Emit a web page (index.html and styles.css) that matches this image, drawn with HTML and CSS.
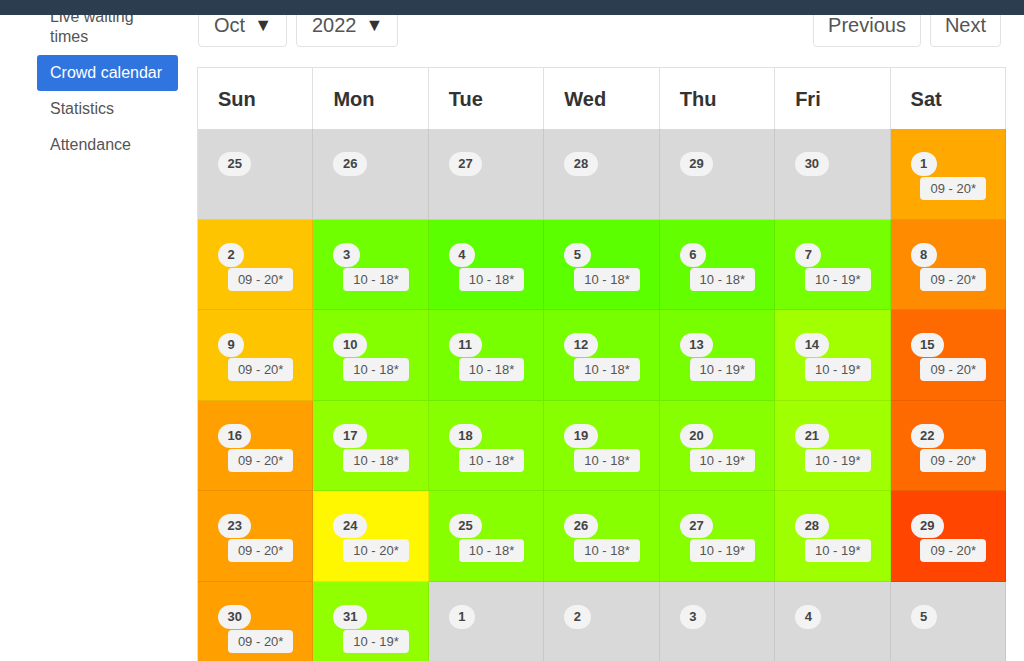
FILE: index.html
```html
<!DOCTYPE html>
<html lang="en">
<head>
<meta charset="utf-8">
<title>Crowd calendar</title>
<link rel="stylesheet" href="styles.css">
</head>
<body>
<div class="topbar"></div>
<div class="page">
  <nav class="sidebar">
    <a class="nav-link" href="#">Live waiting times</a>
    <a class="nav-link active" href="#">Crowd calendar</a>
    <a class="nav-link" href="#">Statistics</a>
    <a class="nav-link" href="#">Attendance</a>
  </nav>
  <main class="main">
    <div class="controls">
      <div class="selects">
        <div class="select">Oct<span class="caret">▼</span></div>
        <div class="select">2022<span class="caret">▼</span></div>
      </div>
      <div class="pager">
        <div class="btn">Previous</div>
        <div class="btn">Next</div>
      </div>
    </div>
    <div class="calendar">
      <div class="head">Sun</div><div class="head">Mon</div><div class="head">Tue</div><div class="head">Wed</div><div class="head">Thu</div><div class="head">Fri</div><div class="head">Sat</div>

      <div class="cell off"><span class="day">25</span></div>
      <div class="cell off"><span class="day">26</span></div>
      <div class="cell off"><span class="day">27</span></div>
      <div class="cell off"><span class="day">28</span></div>
      <div class="cell off"><span class="day">29</span></div>
      <div class="cell off"><span class="day">30</span></div>
      <div class="cell" style="background:#ffa800"><span class="day">1</span><span class="hours">09 - 20*</span></div>

      <div class="cell" style="background:#ffc400"><span class="day">2</span><span class="hours">09 - 20*</span></div>
      <div class="cell" style="background:#6fff00"><span class="day">3</span><span class="hours">10 - 18*</span></div>
      <div class="cell" style="background:#5cff00"><span class="day">4</span><span class="hours">10 - 18*</span></div>
      <div class="cell" style="background:#5cff00"><span class="day">5</span><span class="hours">10 - 18*</span></div>
      <div class="cell" style="background:#63ff00"><span class="day">6</span><span class="hours">10 - 18*</span></div>
      <div class="cell" style="background:#75ff00"><span class="day">7</span><span class="hours">10 - 19*</span></div>
      <div class="cell" style="background:#ff8c00"><span class="day">8</span><span class="hours">09 - 20*</span></div>

      <div class="cell" style="background:#ffc400"><span class="day">9</span><span class="hours">09 - 20*</span></div>
      <div class="cell" style="background:#83ff00"><span class="day">10</span><span class="hours">10 - 18*</span></div>
      <div class="cell" style="background:#77ff00"><span class="day">11</span><span class="hours">10 - 18*</span></div>
      <div class="cell" style="background:#77ff00"><span class="day">12</span><span class="hours">10 - 18*</span></div>
      <div class="cell" style="background:#77ff00"><span class="day">13</span><span class="hours">10 - 19*</span></div>
      <div class="cell" style="background:#a2ff00"><span class="day">14</span><span class="hours">10 - 19*</span></div>
      <div class="cell" style="background:#ff6a00"><span class="day">15</span><span class="hours">09 - 20*</span></div>

      <div class="cell" style="background:#ff9f00"><span class="day">16</span><span class="hours">09 - 20*</span></div>
      <div class="cell" style="background:#91ff00"><span class="day">17</span><span class="hours">10 - 18*</span></div>
      <div class="cell" style="background:#88ff00"><span class="day">18</span><span class="hours">10 - 18*</span></div>
      <div class="cell" style="background:#88ff00"><span class="day">19</span><span class="hours">10 - 18*</span></div>
      <div class="cell" style="background:#88ff00"><span class="day">20</span><span class="hours">10 - 19*</span></div>
      <div class="cell" style="background:#a0ff00"><span class="day">21</span><span class="hours">10 - 19*</span></div>
      <div class="cell" style="background:#ff6a00"><span class="day">22</span><span class="hours">09 - 20*</span></div>

      <div class="cell" style="background:#ff9f00"><span class="day">23</span><span class="hours">09 - 20*</span></div>
      <div class="cell" style="background:#fff700"><span class="day">24</span><span class="hours">10 - 20*</span></div>
      <div class="cell" style="background:#88ff00"><span class="day">25</span><span class="hours">10 - 18*</span></div>
      <div class="cell" style="background:#88ff00"><span class="day">26</span><span class="hours">10 - 18*</span></div>
      <div class="cell" style="background:#88ff00"><span class="day">27</span><span class="hours">10 - 19*</span></div>
      <div class="cell" style="background:#9eff00"><span class="day">28</span><span class="hours">10 - 19*</span></div>
      <div class="cell" style="background:#ff4500"><span class="day">29</span><span class="hours">09 - 20*</span></div>

      <div class="cell" style="background:#ff9f00"><span class="day">30</span><span class="hours">09 - 20*</span></div>
      <div class="cell" style="background:#91ff00"><span class="day">31</span><span class="hours">10 - 19*</span></div>
      <div class="cell off"><span class="day">1</span></div>
      <div class="cell off"><span class="day">2</span></div>
      <div class="cell off"><span class="day">3</span></div>
      <div class="cell off"><span class="day">4</span></div>
      <div class="cell off"><span class="day">5</span></div>
    </div>
  </main>
</div>
</body>
</html>
```
FILE: styles.css
```css
html, body {
  margin: 0;
  padding: 0;
  background: #fff;
  font-family: "Liberation Sans", Arial, Helvetica, sans-serif;
  color: #555;
}

.topbar {
  position: fixed;
  top: 0;
  left: 0;
  right: 0;
  height: 15px;
  background: #2b3d4f;
  z-index: 10;
}

.page {
  display: flex;
  gap: 19px;
  padding-left: 37px;
  padding-right: 18px;
}

.sidebar {
  width: 141px;
  flex: none;
  display: flex;
  flex-direction: column;
  margin-top: -1px;
}

.nav-link {
  display: block;
  padding: 8px 13px;
  font-size: 16px;
  line-height: 20px;
  color: #555;
  text-decoration: none;
  border-radius: 3px;
}

.nav-link.active {
  background: #2f74df;
  color: #fff;
}

.main {
  flex: 1;
  min-width: 0;
  padding-top: 3px;
}

.controls {
  display: flex;
  justify-content: space-between;
  padding-left: 1px;
  padding-right: 5px;
  margin-bottom: 20px;
}

.selects, .pager {
  display: flex;
  gap: 9px;
}

.select, .btn {
  height: 44px;
  box-sizing: border-box;
  border: 1px solid #e2e2e2;
  border-radius: 4px;
  font-size: 20px;
  line-height: 42px;
  color: #555;
  background: #fff;
}

.select {
  display: flex;
  align-items: center;
  padding: 0 14px 0 15px;
}

.caret {
  font-size: 18px;
  margin-left: 9px;
  color: #333;
}

.btn {
  padding: 0 14px;
}

.calendar {
  display: grid;
  grid-template-columns: repeat(7, 1fr);
  grid-template-rows: 61px repeat(6, 90.5px);
  border-left: 1px solid #e0e0e0;
  border-top: 1px solid #e0e0e0;
  width: 809px;
  box-sizing: border-box;
}

.head {
  box-sizing: border-box;
  border-right: 1px solid #e0e0e0;
  padding-left: 20px;
  padding-top: 2px;
  display: flex;
  align-items: center;
  font-size: 20px;
  font-weight: bold;
  color: #333;
  background: #fff;
}

.cell {
  box-sizing: border-box;
  border-right: 1px solid rgba(0, 0, 0, 0.08);
  border-bottom: 1px solid rgba(0, 0, 0, 0.08);
  padding: 23px 19px 0 20px;
  display: flex;
  flex-direction: column;
}

.cell.off {
  background: #d9d9d9;
}

.day {
  align-self: flex-start;
  height: 24px;
  line-height: 24px;
  padding: 0 9.5px;
  border-radius: 12px;
  background: #f3f3f3;
  color: #444;
  font-size: 13px;
  font-weight: bold;
}

.hours {
  align-self: flex-end;
  margin-top: 1px;
  height: 23px;
  line-height: 23px;
  padding: 0 10px;
  border-radius: 4px;
  background: #f3f3f3;
  color: #555;
  font-size: 13px;
}
```
